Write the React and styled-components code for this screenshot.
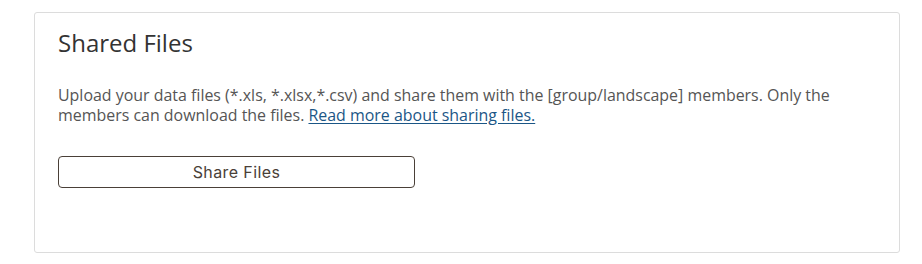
import React from "react";
import styled, { createGlobalStyle } from "styled-components";

const Global = createGlobalStyle`
  html, body { margin: 0; padding: 0; background: #fff; }
  body { font-family: "Open Sans", "Liberation Sans", sans-serif; }
`;

const Page = styled.div`
  padding: 12px 22px 0 34px;
`;

const Card = styled.section`
  box-sizing: border-box;
  width: 866px;
  height: 241px;
  border: 1px solid #dcdcdc;
  border-radius: 3px;
  padding: 14px 23px 0 23px;
  background: #fff;
`;

const Title = styled.h2`
  margin: 0;
  font-family: "Open Sans", sans-serif;
  font-weight: 400;
  font-size: 24px;
  line-height: 32px;
  color: #333;
`;

const Text = styled.p`
  margin: 26px 0 0 0;
  font-family: "Open Sans", sans-serif;
  font-size: 15.95px;
  line-height: 20px;
  color: #555;
`;

const Link = styled.a`
  color: #1b5686;
  text-decoration: underline;
  text-underline-offset: 2px;
`;

const Button = styled.button`
  display: block;
  margin-top: 31px;
  box-sizing: border-box;
  width: 357px;
  height: 32px;
  border: 1px solid #4a4038;
  border-radius: 4px;
  background: #fff;
  font-family: "Inter", "Lato", sans-serif;
  font-size: 16px;
  font-weight: 400;
  color: #4a4038;
  letter-spacing: 0.4px;
  cursor: pointer;
`;

export default function App() {
  return (
    <>
      <Global />
      <Page>
        <Card>
          <Title>Shared Files</Title>
          <Text>
            Upload your data files (*.xls, *.xlsx,*.csv) and share them with the [group/landscape] members. Only the
            members can download the files. <Link href="#">Read more about sharing files.</Link>
          </Text>
          <Button>Share Files</Button>
        </Card>
      </Page>
    </>
  );
}
